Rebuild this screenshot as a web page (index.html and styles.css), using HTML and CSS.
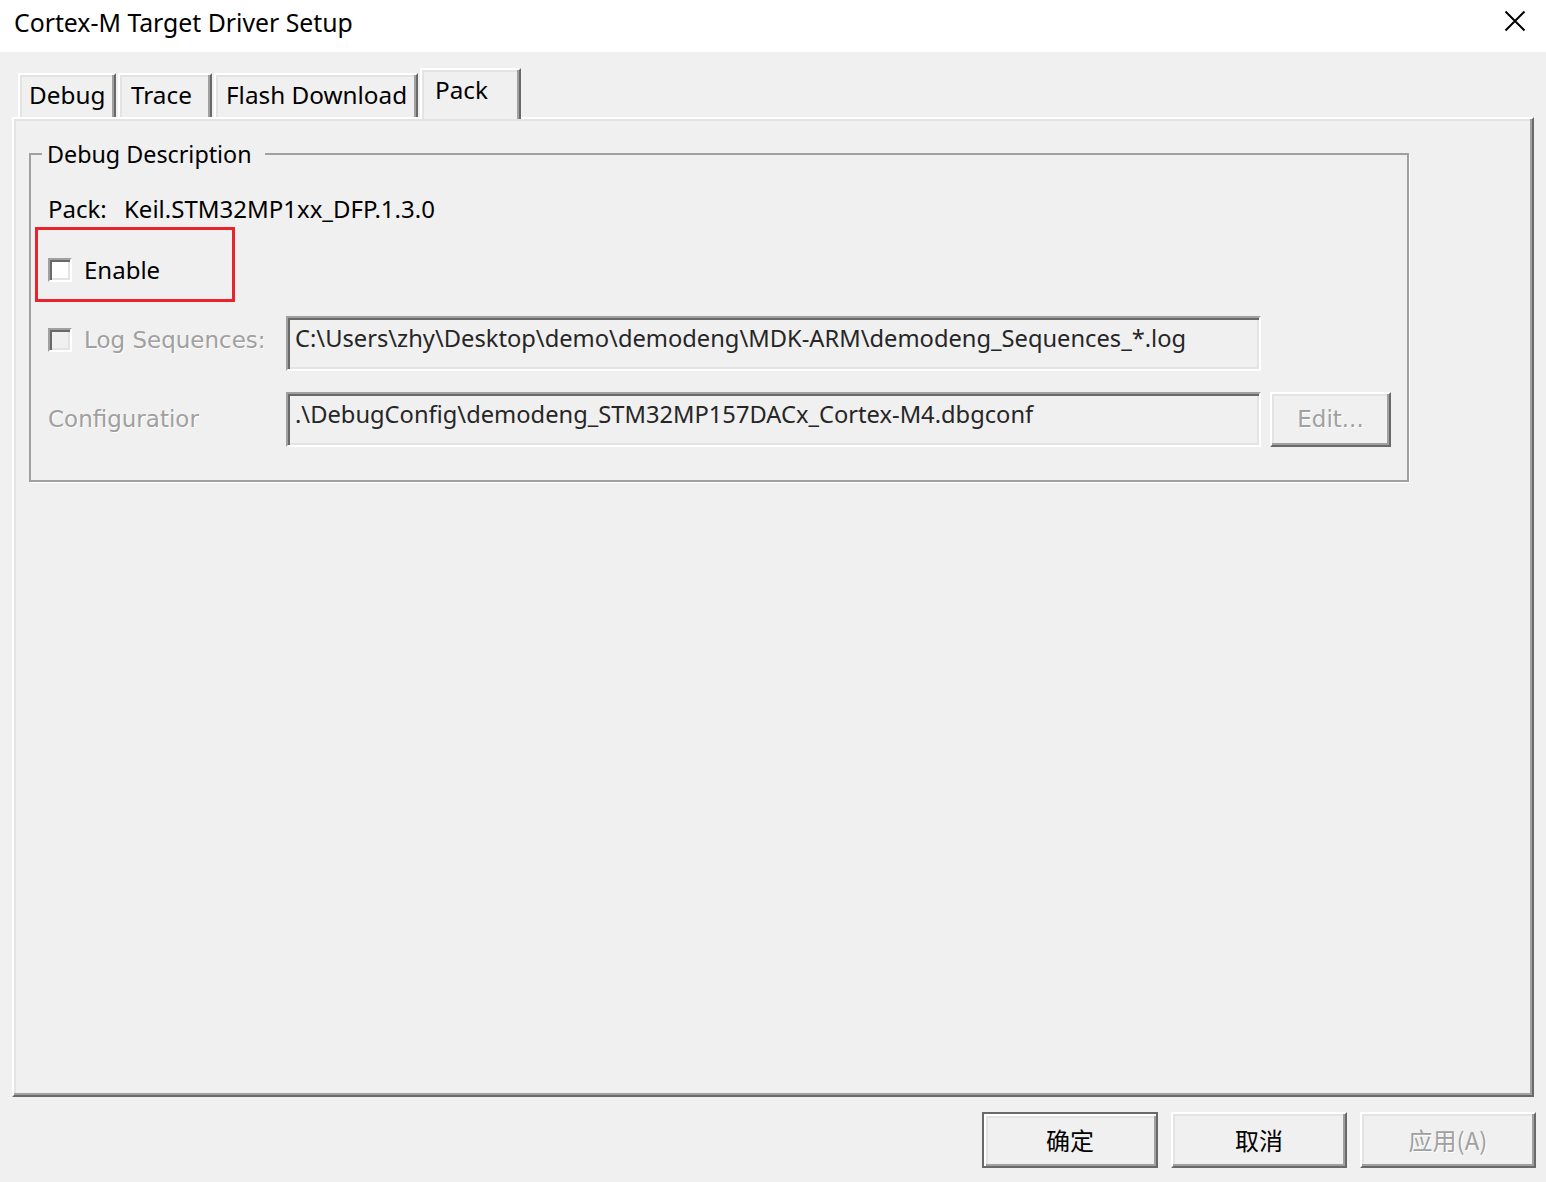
FILE: index.html
```html
<!DOCTYPE html>
<html lang="en">
<head>
<meta charset="utf-8">
<title>Cortex-M Target Driver Setup</title>
<link rel="stylesheet" href="styles.css">
</head>
<body>
<div class="window">
  <header class="titlebar">
    <span class="title">Cortex-M Target Driver Setup</span>
    <svg class="close" width="22" height="22" viewBox="0 0 22 22" aria-hidden="true">
      <path d="M1.5 1.5 L20.5 20.5 M20.5 1.5 L1.5 20.5" stroke="#000" stroke-width="2" fill="none"/>
    </svg>
  </header>

  <main class="main">
    <nav class="tabs">
      <div class="tab tab-debug">Debug</div>
      <div class="tab tab-trace">Trace</div>
      <div class="tab tab-flash">Flash Download</div>
      <div class="tab tab-pack active">Pack</div>
    </nav>

    <section class="panel">
      <fieldset class="groupbox">
        <legend class="legend">Debug Description</legend>

        <div class="row pack-row">
          <span class="pack-label">Pack:</span>
          <span class="pack-value">Keil.STM32MP1xx_DFP.1.3.0</span>
        </div>

        <div class="highlight">
          <span class="checkbox"></span>
          <span class="check-label">Enable</span>
        </div>

        <div class="row field-row log-row">
          <div class="label-cell">
            <span class="checkbox disabled"></span>
            <span class="disabled-text">Log Sequences:</span>
          </div>
          <div class="edit">C:\Users\zhy\Desktop\demo\demodeng\MDK-ARM\demodeng_Sequences_*.log</div>
        </div>

        <div class="row field-row conf-row">
          <div class="label-cell">
            <span class="disabled-text">Configuratior</span>
          </div>
          <div class="edit">.\DebugConfig\demodeng_STM32MP157DACx_Cortex-M4.dbgconf</div>
          <div class="btn small-btn"><span class="disabled-text">Edit...</span></div>
        </div>
      </fieldset>
    </section>

    <footer class="buttons">
      <div class="btn dlg-btn default"><span class="cjk">确定</span></div>
      <div class="btn dlg-btn"><span class="cjk">取消</span></div>
      <div class="btn dlg-btn"><span class="cjk disabled-cjk">应用(A)</span></div>
    </footer>
  </main>
</div>
</body>
</html>
```

FILE: styles.css
```css
* { box-sizing: border-box; }

html, body {
  margin: 0;
  padding: 0;
}

body {
  width: 1546px;
  height: 1182px;
  overflow: hidden;
  background: #f0f0f0;
  font-family: "Noto Sans", "Open Sans", sans-serif;
  font-size: 24px;
  color: #000;
}

.window {
  width: 1546px;
  height: 1182px;
}

/* ---------- title bar ---------- */
.titlebar {
  height: 52px;
  background: #fff;
  display: flex;
  align-items: flex-start;
  justify-content: space-between;
  padding: 6px 20px 0 14px;
}

.title {
  line-height: 32px;
  font-size: 24.8px;
}

.close {
  margin-top: 4px;
}

/* ---------- main area ---------- */
.main {
  padding: 16px 0 0 12px;
}

.tabs {
  display: flex;
  align-items: flex-end;
  gap: 2px;
  height: 51px;
  margin-bottom: -2px;
  padding-left: 6px;
  position: relative;
  z-index: 1;
}

.tab {
  height: 44px;
  margin-bottom: 2px;
  background: #f0f0f0;
  border-top: 2px solid #fff;
  border-left: 2px solid #fff;
  border-right: 2px solid #696969;
  box-shadow: inset -2px 0 0 #a0a0a0, inset 2px 2px 0 #e3e3e3;
  padding: 3px 0 0 9px;
  line-height: 34px;
  font-size: 24.3px;
  white-space: nowrap;
}

.tab-debug { width: 98px; }
.tab-trace { width: 94px; padding-left: 11px; }
.tab-flash { width: 204px; padding-left: 10px; }

.tab.active {
  width: 101px;
  height: 51px;
  margin-bottom: 0;
  padding: 3px 0 0 13px;
}

/* ---------- tab panel ---------- */
.panel {
  width: 1522px;
  height: 980px;
  border-top: 2px solid #fff;
  border-left: 2px solid #fff;
  border-right: 2px solid #696969;
  border-bottom: 2px solid #696969;
  box-shadow: inset -2px -2px 0 #a0a0a0, inset 2px 2px 0 #e3e3e3;
  padding: 19px 0 0 15px;
}

.groupbox {
  width: 1380px;
  margin: 0;
  border: 2px solid #a0a0a0;
  box-shadow: 1px 1px 0 #fff;
  padding: 0 0 33px 4px;
  min-inline-size: 0;
}

.legend {
  margin-left: 7px;
  padding: 0 13px 0 5px;
  line-height: 32px;
  font-size: 23.3px;
}

.row {
  display: flex;
  align-items: center;
}

.pack-row {
  height: 40px;
  margin-top: 18px;
  padding-left: 13px;
}

.pack-label {
  width: 76px;
}

/* red annotation box around the Enable option */
.highlight {
  width: 200px;
  height: 75px;
  margin-top: -1px;
  border: 3px solid #e8232b;
  display: flex;
  align-items: center;
  padding: 10px 0 0 10px;
}

.checkbox {
  display: inline-block;
  flex: none;
  width: 24px;
  height: 24px;
  background: #fff;
  border-top: 2px solid #a0a0a0;
  border-left: 2px solid #a0a0a0;
  border-right: 2px solid #fff;
  border-bottom: 2px solid #fff;
  box-shadow: inset 2px 2px 0 #696969, inset -2px -2px 0 #e3e3e3;
}

.checkbox.disabled {
  background: #f0f0f0;
}

.check-label {
  margin-left: 12px;
  line-height: 32px;
}

.field-row {
  height: 55px;
  align-items: stretch;
}

.log-row {
  margin-top: 14px;
}

.conf-row {
  margin-top: 21px;
}

.label-cell {
  width: 251px;
  flex: none;
  display: flex;
  align-items: center;
  gap: 12px;
  padding-left: 13px;
}

.log-row .label-cell {
  padding-bottom: 8px;
}

.conf-row .label-cell {
  padding-bottom: 2px;
}

.disabled-text {
  font-family: "DejaVu Sans", Verdana, sans-serif;
  font-size: 23px;
  color: #a0a0a0;
  text-shadow: 1px 1px 0 #fff;
  white-space: nowrap;
}

.edit {
  width: 975px;
  flex: none;
  background: #f0f0f0;
  border-top: 2px solid #a0a0a0;
  border-left: 2px solid #a0a0a0;
  border-right: 2px solid #fff;
  border-bottom: 2px solid #fff;
  box-shadow: inset 2px 2px 0 #696969, inset -2px -2px 0 #e3e3e3;
  padding: 4px 0 0 7px;
  line-height: 32px;
  font-size: 23.7px;
  color: #262626;
  white-space: nowrap;
  overflow: hidden;
}

/* ---------- buttons ---------- */
.btn {
  display: flex;
  align-items: center;
  justify-content: center;
  background: #f0f0f0;
  border-top: 2px solid #fff;
  border-left: 2px solid #fff;
  border-right: 2px solid #696969;
  border-bottom: 2px solid #696969;
  box-shadow: inset -2px -2px 0 #a0a0a0, inset 2px 2px 0 #e3e3e3;
}

.small-btn {
  width: 121px;
  flex: none;
  margin-left: 9px;
  padding-bottom: 2px;
}

.buttons {
  display: flex;
  justify-content: flex-end;
  gap: 13px;
  margin-top: 15px;
  padding-right: 10px;
}

.dlg-btn {
  width: 176px;
  height: 56px;
}

.dlg-btn.default {
  border: 2px solid #696969;
  box-shadow: inset 2px 2px 0 #fff, inset -2px -2px 0 #a0a0a0, inset 4px 4px 0 #e3e3e3;
}

.cjk {
  font-family: "Noto Sans CJK SC", "Noto Sans", sans-serif;
  font-size: 24px;
  line-height: 32px;
}

.disabled-cjk {
  color: #a0a0a0;
  text-shadow: 1px 1px 0 #fff;
}
```
